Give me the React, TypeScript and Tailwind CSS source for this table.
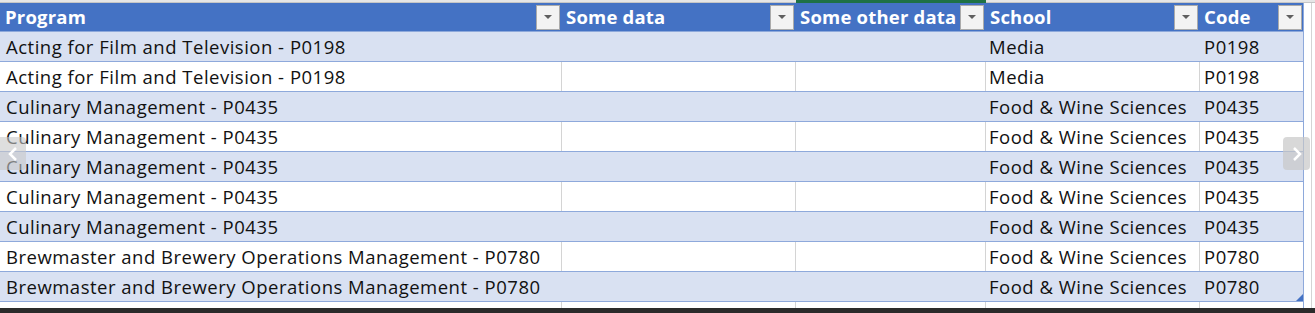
import React from 'react';

type Row = { program: string; school: string; code: string };

const rows: Row[] = [
  { program: 'Acting for Film and Television - P0198', school: 'Media', code: 'P0198' },
  { program: 'Acting for Film and Television - P0198', school: 'Media', code: 'P0198' },
  { program: 'Culinary Management - P0435', school: 'Food & Wine Sciences', code: 'P0435' },
  { program: 'Culinary Management - P0435', school: 'Food & Wine Sciences', code: 'P0435' },
  { program: 'Culinary Management - P0435', school: 'Food & Wine Sciences', code: 'P0435' },
  { program: 'Culinary Management - P0435', school: 'Food & Wine Sciences', code: 'P0435' },
  { program: 'Culinary Management - P0435', school: 'Food & Wine Sciences', code: 'P0435' },
  { program: 'Brewmaster and Brewery Operations Management - P0780', school: 'Food & Wine Sciences', code: 'P0780' },
  { program: 'Brewmaster and Brewery Operations Management - P0780', school: 'Food & Wine Sciences', code: 'P0780' },
];

const headers = ['Program', 'Some data', 'Some other data', 'School', 'Code'];

const cols = 'grid grid-cols-[561px_234px_190px_214px_104px]';

function FilterButton() {
  return (
    <div className="flex h-[25px] w-[24px] shrink-0 items-center justify-center border border-[#ababab] bg-[#f3f3f3]">
      <div className="h-0 w-0 border-x-[4px] border-t-[4px] border-x-transparent border-t-[#5f5f5f]" />
    </div>
  );
}

export default function App() {
  return (
    <div className="relative flex h-[313px] w-[1315px] flex-col overflow-hidden bg-white font-['Open_Sans',sans-serif] text-[18.5px] tracking-[0.5px] text-[#111]">
      {/* column header strip */}
      <div className="flex h-[3px]">
        <div className="w-[796px] border-b border-[#c6c6c6] bg-[#e6e6e6]" />
        <div className="w-[190px] bg-[#1e7145]" />
        <div className="flex-1 border-b border-[#c6c6c6] bg-[#e6e6e6]" />
      </div>

      <div className="flex">
        <div className="w-[1304px] border-r border-[#8ea9db]">
          <div className={`${cols} h-[29px] border-b border-[#8ea9db] bg-[#4472c4]`}>
            {headers.map((h) => (
              <div key={h} className="flex items-center justify-between pr-px pl-[5px]">
                <span className="truncate font-bold tracking-[0.2px] text-white">{h}</span>
                <FilterButton />
              </div>
            ))}
          </div>
          {rows.map((r, i) => {
            const banded = i % 2 === 0;
            const line = banded ? 'border-l border-[#d9e1f2]' : 'border-l border-[#d4d4d4]';
            return (
              <div
                key={i}
                className={`${cols} h-[30px] border-b border-[#8ea9db] ${banded ? 'bg-[#d9e1f2]' : 'bg-white'}`}
              >
                <div className="flex items-center overflow-visible pt-px pl-[6px] whitespace-nowrap">{r.program}</div>
                <div className={line} />
                <div className={line} />
                <div className={`${line} flex items-center pt-px pl-[3px] whitespace-nowrap`}>{r.school}</div>
                <div className={`${line} flex items-center pt-px pl-[4px]`}>{r.code}</div>
              </div>
            );
          })}
          <div className={`${cols} h-[6px]`}>
            <div />
            <div className="border-l border-[#d4d4d4]" />
            <div className="border-l border-[#d4d4d4]" />
            <div className="border-l border-[#d4d4d4]" />
            <div className="border-l border-[#d4d4d4]" />
          </div>
        </div>
        <div className="flex-1 pl-[7px]">
          <div className="h-full border-l border-[#d4d4d4]" />
        </div>
      </div>

      <div className="h-[5px] bg-[#2b2b2b]" />

      {/* resize handle */}
      <div className="absolute top-[294px] left-[1296px] h-0 w-0 border-b-[7px] border-l-[7px] border-b-[#4472c4] border-l-transparent" />

      {/* scroll arrows */}
      <div className="absolute top-[137px] left-0 flex h-[33px] w-[26px] items-center justify-center rounded-r bg-[#c8c8c8]/60">
        <svg width="10" height="16" viewBox="0 0 10 16">
          <path d="M8 2 L2 8 L8 14" fill="none" stroke="white" strokeWidth="2.5" />
        </svg>
      </div>
      <div className="absolute top-[137px] left-[1283px] flex h-[33px] w-[27px] items-center justify-center rounded bg-[#c8c8c8]/70">
        <svg width="10" height="16" viewBox="0 0 10 16">
          <path d="M2 2 L8 8 L2 14" fill="none" stroke="white" strokeWidth="2.5" />
        </svg>
      </div>
    </div>
  );
}
